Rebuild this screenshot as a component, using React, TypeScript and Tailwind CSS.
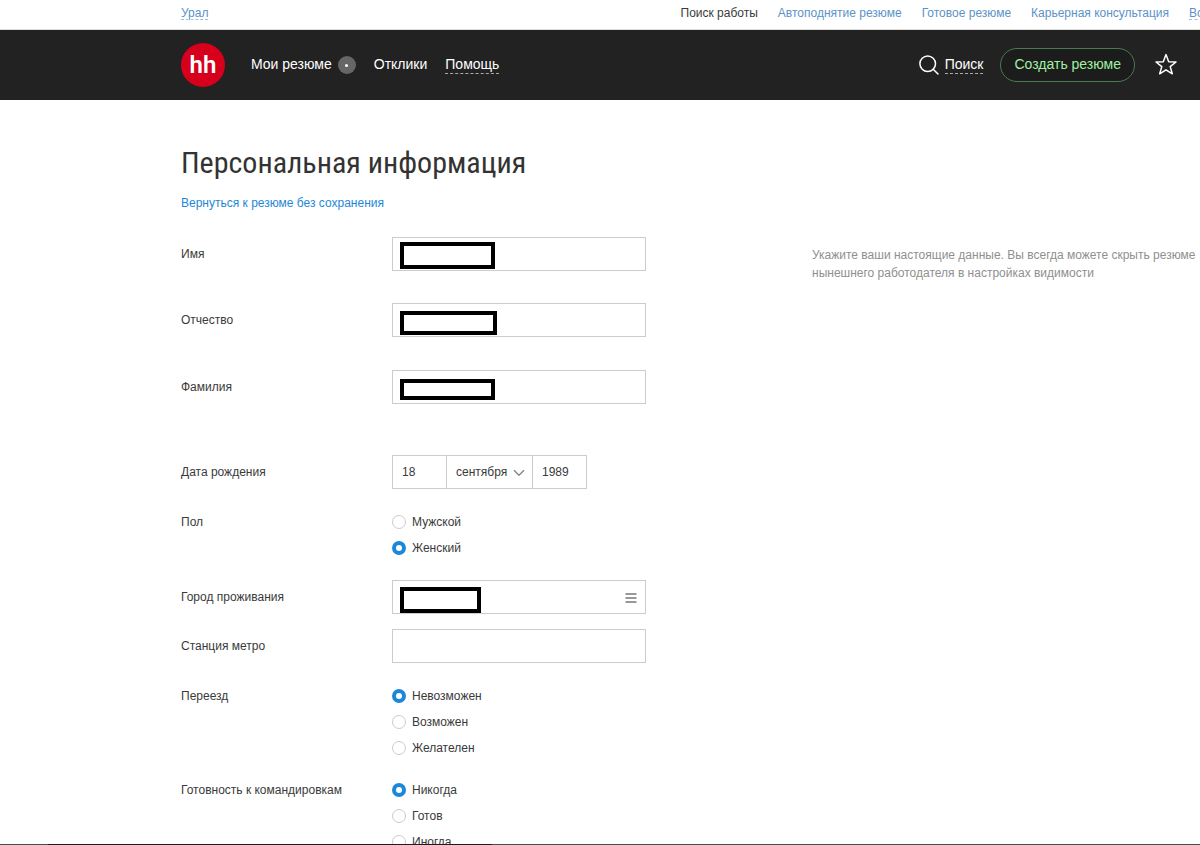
import { useState, type ReactNode } from "react";

const services = ["Автоподнятие резюме", "Готовое резюме", "Карьерная консультация"];

function Row({ label, htmlFor, children, className = "" }: { label: string; htmlFor: string; children: ReactNode; className?: string }) {
  return (
    <div className={`flex ${className}`}>
      <label htmlFor={htmlFor} className="w-[211px] shrink-0 pt-2 leading-[18px]">
        {label}
      </label>
      {children}
    </div>
  );
}

function TextField({ id, mask, menu = false }: { id: string; mask?: string; menu?: boolean }) {
  return (
    <div className="relative w-[254px] shrink-0">
      <input id={id} type="text" className="block h-[34px] w-full border border-[#ccc] bg-white px-2.5 outline-none focus:border-[#1e88d8]" />
      {mask && <span aria-hidden="true" className={`pointer-events-none absolute left-2 border-4 border-black bg-white ${mask}`} />}
      {menu && (
        <button type="button" aria-label="Выбрать город" className="absolute right-2 top-3 h-3 w-3.5">
          <svg viewBox="0 0 14 12" className="block h-full w-full" stroke="#777" strokeWidth="1.4">
            <path d="M1.5 2H12.5M1.5 6H12.5M1.5 10H12.5" />
          </svg>
        </button>
      )}
    </div>
  );
}

function RadioRow({ label, name, options, initial, className = "" }: { label: string; name: string; options: string[]; initial: string; className?: string }) {
  const [value, setValue] = useState(initial);
  return (
    <div role="radiogroup" aria-labelledby={`${name}-label`} className={`flex leading-[18px] ${className}`}>
      <span id={`${name}-label`} className="w-[211px] shrink-0">
        {label}
      </span>
      <div className="flex flex-col gap-2">
        {options.map((option) => (
          <label key={option} className="flex cursor-pointer items-center gap-1.5">
            <input
              type="radio"
              name={name}
              checked={value === option}
              onChange={() => setValue(option)}
              className="h-3.5 w-3.5 appearance-none rounded-full border border-[#ccc] bg-white checked:border-4 checked:border-[#1e88d8]"
            />
            {option}
          </label>
        ))}
      </div>
    </div>
  );
}

export default function App() {
  return (
    <div className="flex h-screen flex-col overflow-hidden bg-white font-['Liberation_Sans',Arial,sans-serif] text-xs text-[#3a3a3a]">
      <div className="flex h-[30px] shrink-0 items-start whitespace-nowrap border-b border-[#ddd] pl-[181px] pt-1 leading-[18px]">
        <a href="#region" className="text-[#5b93c6] underline decoration-[#9fbfdc] decoration-dashed decoration-1 underline-offset-2">Урал</a>
        <nav className="ml-auto flex shrink-0 gap-5 text-[#5b93c6]">
          <a href="#jobs" className="text-[#3a3a3a]">Поиск работы</a>
          {services.map((s) => (
            <a key={s} href="#services">{s}</a>
          ))}
          <a href="#all" className="w-[11px] overflow-hidden underline decoration-[#9fbfdc] decoration-dashed decoration-1 underline-offset-2">Все</a>
        </nav>
      </div>

      <header className="flex h-[70px] shrink-0 items-center bg-[#222] pl-[181px] pr-[22px] text-sm leading-[17px] text-white">
        <a href="#home" aria-label="HeadHunter" className="flex h-11 w-11 items-center justify-center rounded-full bg-[#d6001c] font-['Roboto',sans-serif] text-2xl font-semibold">
          hh
        </a>
        <a href="#resumes" className="ml-[26px] flex items-center">
          <span className="border-b border-transparent">Мои резюме</span>
          <span className="ml-1.5 flex h-[18px] w-[18px] items-center justify-center rounded-full bg-[#666]">
            <span className="h-[3px] w-[3px] rounded-full bg-white" />
          </span>
        </a>
        <a href="#responses" className="ml-[18px] border-b border-transparent">Отклики</a>
        <a href="#help" className="ml-[18px] border-b border-dashed border-[#aaa]">Помощь</a>
        <button type="button" className="ml-auto flex items-center gap-1.5">
          <svg viewBox="0 0 20 20" className="h-5 w-5" fill="none" stroke="white" strokeWidth="1.5" strokeLinecap="round">
            <circle cx="8.7" cy="8.7" r="7.8" />
            <path d="M14.2 14.2L19 19" />
          </svg>
          <span className="border-b border-dashed border-[#aaa]">Поиск</span>
        </button>
        <a href="#create" className="ml-[17px] flex h-[34px] items-center rounded-full border border-[#4a7a50] bg-[#1c1c1c] px-[13px] pb-px text-[#a0f0a0]">Создать резюме</a>
        <a href="#favorites" aria-label="Избранное" className="ml-[19px]">
          <svg viewBox="0 0 24 24" className="h-6 w-6" fill="none" stroke="white" strokeWidth="1.5" strokeLinejoin="round">
            <path d="M12 1.6L14.7 8.7L22 9L16.2 13.6L18.3 20.8L12 16.8L5.7 20.8L7.8 13.6L2 9L9.3 8.7Z" />
          </svg>
        </a>
      </header>

      <main className="min-h-0 grow overflow-hidden pl-[181px] pt-11">
        <h1 className="font-['Liberation_Sans_Narrow','Roboto_Condensed','Open_Sans',sans-serif] text-[30px] leading-[38px] text-[#333]">Персональная информация</h1>
        <a href="#back" className="mt-3 block w-fit leading-[18px] text-[#1e88d8]">Вернуться к резюме без сохранения</a>

        <form className="mt-[25px]">
          <Row label="Имя" htmlFor="first">
            <TextField id="first" mask="top-[5px] h-[27px] w-[95px]" />
            <p className="ml-[166px] w-[432px] shrink-0 pt-[9px] leading-[18px] text-[#8f8f8f]">
              Укажите ваши настоящие данные. Вы всегда можете скрыть резюме
              <br />
              нынешнего работодателя в настройках видимости
            </p>
          </Row>
          <Row label="Отчество" htmlFor="middle" className="mt-[21px]">
            <TextField id="middle" mask="top-2 h-6 w-[97px]" />
          </Row>
          <Row label="Фамилия" htmlFor="last" className="mt-[33px]">
            <TextField id="last" mask="top-[9px] h-[21px] w-[95px]" />
          </Row>
          <Row label="Дата рождения" htmlFor="day" className="mt-[51px]">
            <div className="flex">
              <input id="day" type="text" defaultValue="18" className="h-[34px] w-[55px] border border-[#ccc] px-[9px] outline-none" />
              <div className="relative">
                <select aria-label="Месяц" defaultValue="сентября" className="h-[34px] w-[85px] appearance-none border-y border-[#ccc] bg-white pl-[9px] outline-none">
                  <option>августа</option>
                  <option>сентября</option>
                  <option>октября</option>
                </select>
                <svg viewBox="0 0 12 8" className="pointer-events-none absolute right-[7px] top-[14px] h-2 w-3" fill="none" stroke="#888" strokeWidth="1.5">
                  <path d="M1 1.2L6 6.2L11 1.2" />
                </svg>
              </div>
              <input aria-label="Год" type="text" defaultValue="1989" className="h-[34px] w-[55px] border border-[#ccc] px-[9px] outline-none" />
            </div>
          </Row>
          <RadioRow label="Пол" name="sex" options={["Мужской", "Женский"]} initial="Женский" className="mt-6" />
          <Row label="Город проживания" htmlFor="city" className="mt-[23px]">
            <TextField id="city" mask="top-[7px] h-[26px] w-[81px]" menu />
          </Row>
          <Row label="Станция метро" htmlFor="metro" className="mt-[15px]">
            <TextField id="metro" />
          </Row>
          <RadioRow label="Переезд" name="move" options={["Невозможен", "Возможен", "Желателен"]} initial="Невозможен" className="mt-6" />
          <RadioRow label="Готовность к командировкам" name="trips" options={["Никогда", "Готов", "Иногда"]} initial="Никогда" className="mt-6" />
        </form>
      </main>
      <div className="flex h-px shrink-0 bg-[#454d58]">
        <div className="ml-[4%] w-[37%] bg-[#201c1e]" />
      </div>
    </div>
  );
}
